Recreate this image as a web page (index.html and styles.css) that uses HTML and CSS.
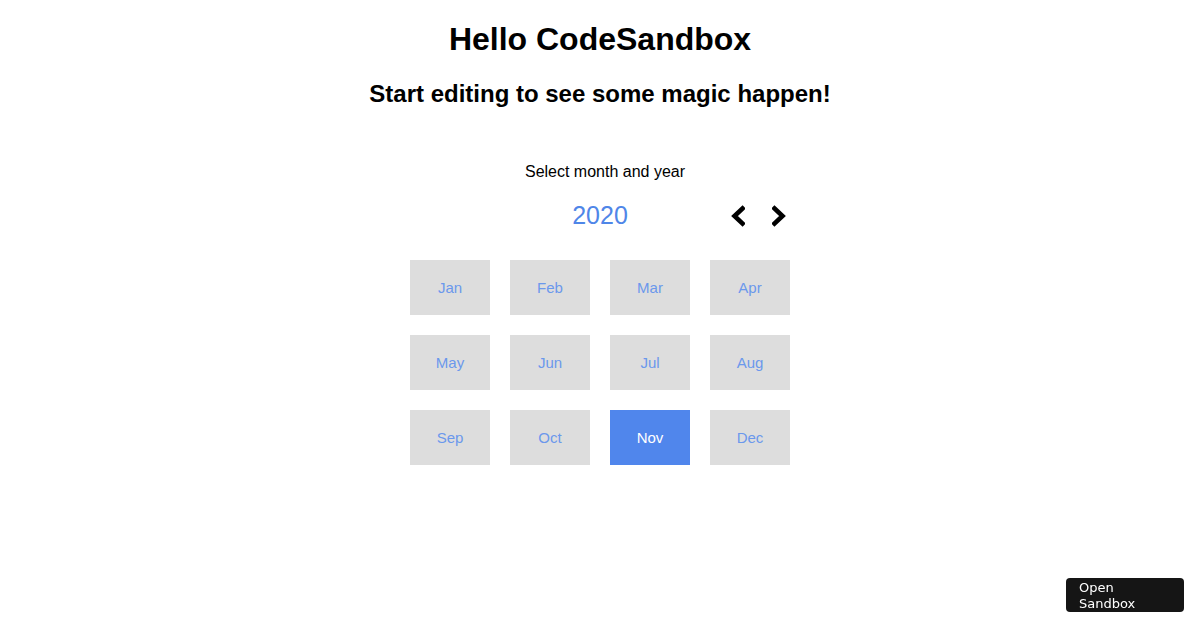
FILE: index.html
```html
<!DOCTYPE html>
<html>
<head>
<meta charset="utf-8">
<link rel="stylesheet" href="styles.css">
</head>
<body>
<div class="app">
  <h1>Hello CodeSandbox</h1>
  <h2>Start editing to see some magic happen!</h2>
  <div class="picker">
    <div class="label">Select month and year</div>
    <div class="head">
      <span></span>
      <span class="year">2020</span>
      <span class="arrows">
        <svg class="chev" width="14" height="24" viewBox="0 0 14 24"><polyline points="11.5,4.5 3.5,12 11.5,19.5" fill="none" stroke="#000" stroke-width="4.6" stroke-linejoin="miter" stroke-linecap="square"/></svg>
        <svg class="chev" width="14" height="24" viewBox="0 0 14 24"><polyline points="2.5,4.5 10.5,12 2.5,19.5" fill="none" stroke="#000" stroke-width="4.6" stroke-linejoin="miter" stroke-linecap="square"/></svg>
      </span>
    </div>
    <div class="grid">
      <div class="m">Jan</div><div class="m">Feb</div><div class="m">Mar</div><div class="m">Apr</div>
      <div class="m">May</div><div class="m">Jun</div><div class="m">Jul</div><div class="m">Aug</div>
      <div class="m">Sep</div><div class="m">Oct</div><div class="m sel">Nov</div><div class="m">Dec</div>
    </div>
  </div>
</div>
<a class="open">Open<br>Sandbox</a>
</body>
</html>
```
FILE: styles.css
```css
html, body { margin: 0; padding: 0; background: #fff; }
body { font-family: "Liberation Sans", Arial, sans-serif; color: #000; }
.app { text-align: center; }
h1 { font-size: 32px; font-weight: bold; margin: 21.44px 0; }
h2 { font-size: 24px; font-weight: bold; margin: 19.92px 0; }
.picker { width: 380px; margin: 0 auto; padding-top: 35px; }
.label { font-size: 16px; line-height: 18px; padding-left: 10px; }
.head { display: grid; grid-template-columns: 1fr auto 1fr; align-items: center; margin-top: 19px; height: 32px; }
.year { color: #4f86e8; font-size: 25px; }
.arrows { display: flex; justify-content: flex-end; gap: 27px; padding-right: 4px; }
.chev { display: block; }
.grid { display: grid; grid-template-columns: repeat(4, 80px); gap: 20px; margin-top: 28px; }
.m { height: 55px; background: #dddddd; color: #6b98ec; font-size: 15px; display: flex; align-items: center; justify-content: center; }
.m.sel { background: #5086ec; color: #fff; }
.open { position: fixed; right: 16px; bottom: 18px; width: 105px; height: 32px; padding: 2px 0 0 13px; background: #151515; color: #fff; border-radius: 4px; font-family: "DejaVu Sans", sans-serif; font-size: 13px; line-height: 16px; }
```
